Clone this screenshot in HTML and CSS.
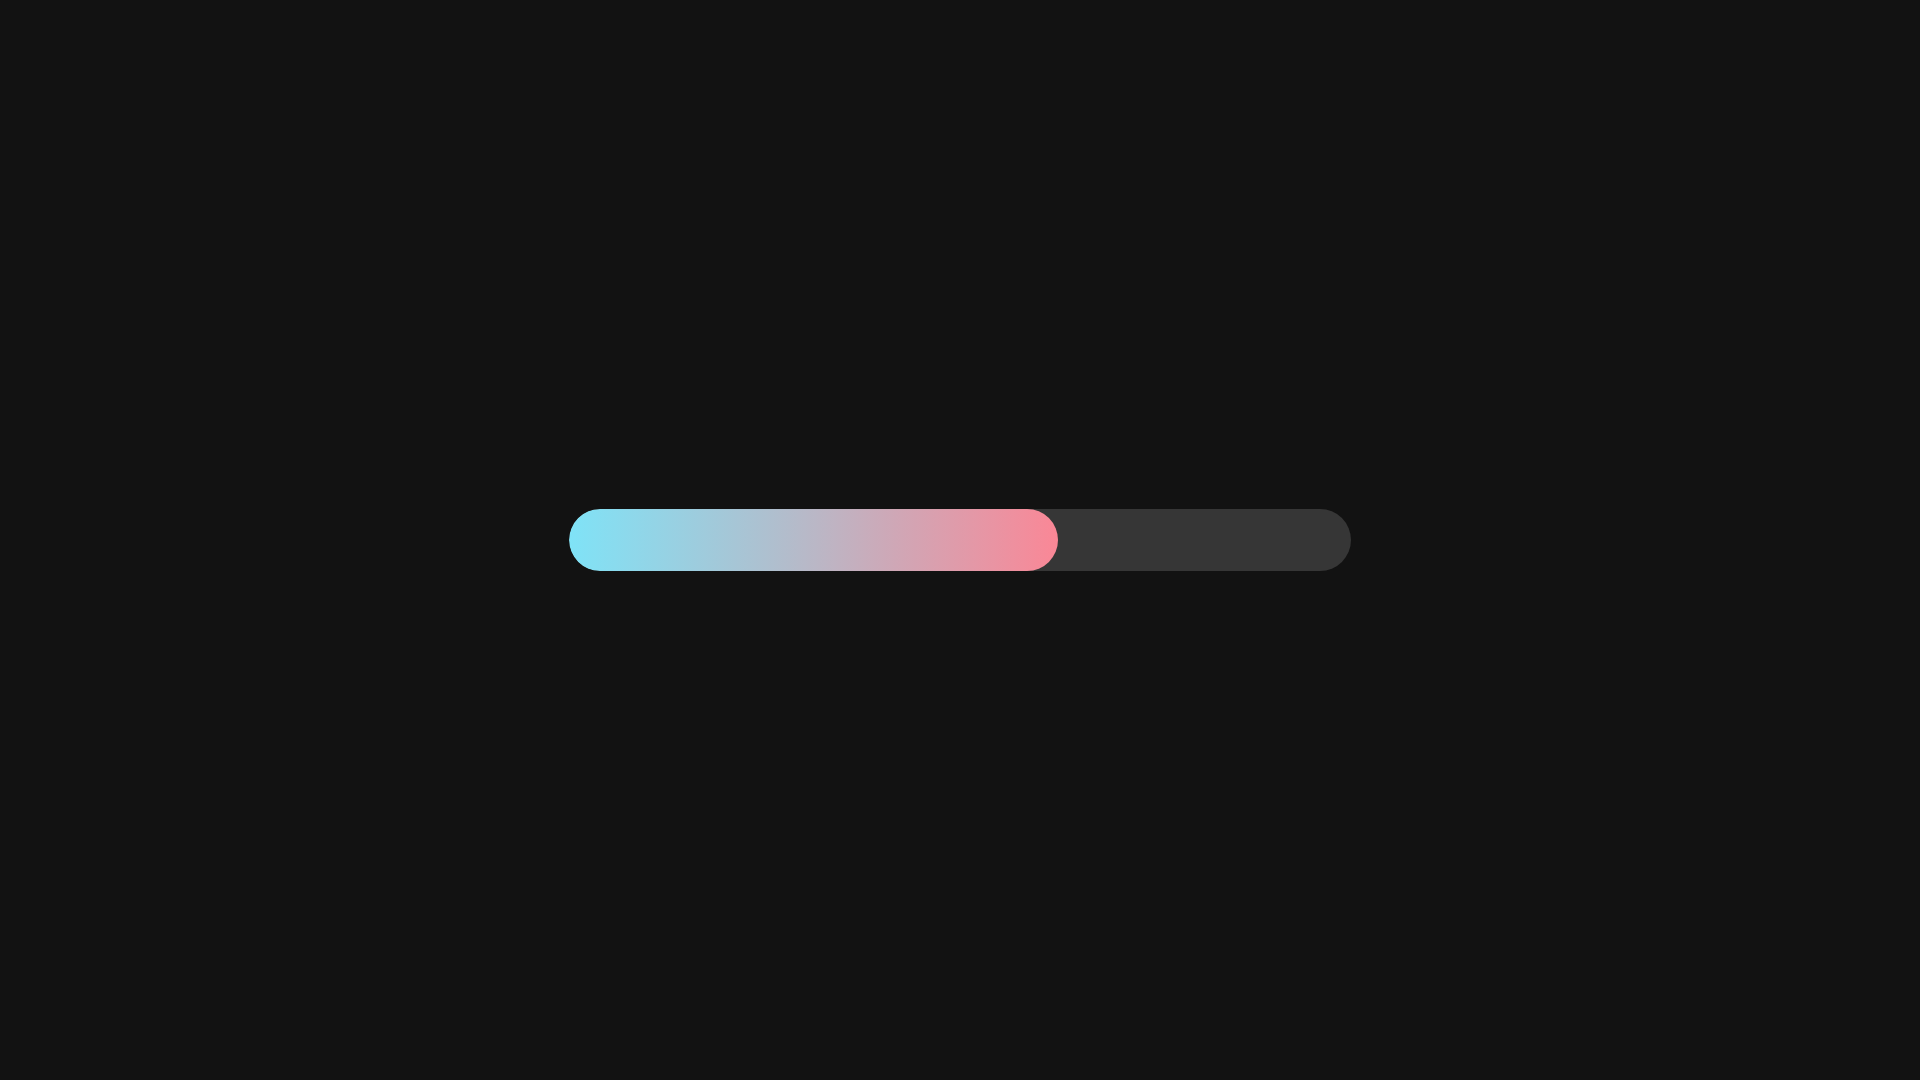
FILE: index.html
```html
<!DOCTYPE html>
<html lang="en">
<head>
    <meta charset="UTF-8">
    <meta name="viewport" content="width=device-width, initial-scale=1.0">
    <title>Progress</title>
    <link rel="stylesheet" href="styles.css">
</head>
<body>
    <main class="stage">
        <!-- progress bar -->
        <div class="track">
            <div class="fill" style="width: 62.5%;"></div>
        </div>
    </main>
</body>
</html>
```
FILE: styles.css
```css
* {margin:0;padding:0;box-sizing:border-box;}
body {background:#121212;font-family:"Liberation Sans", Arial, sans-serif;}

.stage {height:100vh;display:flex;align-items:center;justify-content:center;}

/* track = grey pill, fill = gradient pill on top */
.track {width:782px;height:62px;border-radius:31px;background:#363636;overflow:hidden;}
.fill {height:100%;border-radius:31px;
       background:linear-gradient(90deg, #7fe3f7 0%, #b3bccb 45%, #fa8796 100%);
}
```
